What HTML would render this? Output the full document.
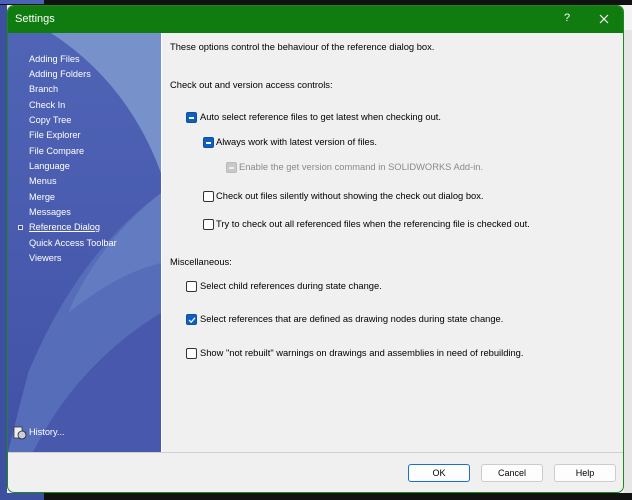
<!DOCTYPE html>
<html><head><meta charset="utf-8">
<style>
*{margin:0;padding:0;box-sizing:border-box}
body{width:632px;height:500px;overflow:hidden;background:#f3f3f3;position:relative;font-family:"Liberation Sans",sans-serif;font-size:9.35px;color:#000}
.abs{position:absolute;white-space:nowrap}
.dlg{position:absolute;left:7px;top:5px;width:617px;height:488px;background:#f0f0f0;border:1px solid #1b8a1b;border-radius:7px;overflow:hidden}
.tb{position:absolute;left:0;top:0;width:100%;height:27px;background:#107c10;color:#fff}
.nav{color:#fff;font-size:9.2px;left:21px}
.cb{position:absolute;width:11px;height:11px;border:1px solid #333;border-radius:2px;background:#fff}
.cb.on{background:#0f5fc0;border-color:#0c4fa0}
.cb.on::after{content:"";position:absolute;left:2px;top:4px;width:5px;height:1.5px;background:#fff}
.cb.chk{background:#0f5fc0;border-color:#0c4fa0}
.cb.dis{background:#c8c8c8;border-color:#bbb}
.cb.dis::after{content:"";position:absolute;left:2px;top:4px;width:5px;height:1.5px;background:#eee}
.btn{position:absolute;top:458px;width:62px;height:18px;border:1px solid #ccc;border-radius:3px;background:#fdfdfd;text-align:center;line-height:16px;font-size:9px}
</style></head><body>
<div class="abs" style="left:0;top:0;width:632px;height:5px;background:#111"></div>
<div class="abs" style="left:0;top:0;width:44px;height:4px;background:#4a62b8"></div>
<div class="abs" style="left:0;top:5px;width:7px;height:495px;background:#3d4f9f"></div>
<div class="abs" style="left:0;top:493px;width:632px;height:7px;background:#111"></div>
<div class="abs" style="left:0;top:493px;width:44px;height:7px;background:#3d4f9f"></div>
<div class="abs" style="left:624px;top:30px;width:8px;height:463px;background:#e6e6e6"></div>
<div class="dlg">
 <div class="tb"><span class="abs" style="left:7px;top:7px;font-size:11px">Settings</span>
  <span class="abs" style="left:556px;top:6px;font-size:11px">?</span>
  <svg class="abs" style="left:591px;top:8px" width="10" height="10"><path d="M1 1L9 9M9 1L1 9" stroke="#fff" stroke-width="1.2"/></svg>
 </div>
 <svg class="abs" style="left:0;top:27px" width="153" height="419">
  <defs><linearGradient id="g" x1="0" y1="0" x2="0" y2="1"><stop offset="0" stop-color="#5064b6"/><stop offset="1" stop-color="#4152a6"/></linearGradient></defs>
  <rect width="153" height="419" fill="url(#g)"/>
  <path d="M43 0 Q120 50 153 140 L153 0Z" fill="#7792ca"/>
  <path d="M153 160 Q70 220 20 340 L0 419 L153 419Z" fill="#566dba"/>
  <path d="M153 160 Q90 210 60 280 Q110 240 153 230Z" fill="#6c86c6" opacity="0.6"/>
  <path d="M153 280 Q70 330 25 419 L153 419Z" fill="#4858ac"/>
 </svg>
 <div class="abs" style="left:153px;top:27px;width:1px;height:419px;background:#fff"></div>
 <div class="abs" style="left:0;top:446px;width:617px;height:1px;background:#cfcfcf"></div>
 <span class="abs nav" style="top:48px">Adding Files</span>
 <span class="abs nav" style="top:63px">Adding Folders</span>
 <span class="abs nav" style="top:78px">Branch</span>
 <span class="abs nav" style="top:94px">Check In</span>
 <span class="abs nav" style="top:109px">Copy Tree</span>
 <span class="abs nav" style="top:124px">File Explorer</span>
 <span class="abs nav" style="top:140px">File Compare</span>
 <span class="abs nav" style="top:155px">Language</span>
 <span class="abs nav" style="top:170px">Menus</span>
 <span class="abs nav" style="top:186px">Merge</span>
 <span class="abs nav" style="top:201px">Messages</span>
 <span class="abs" style="left:10px;top:219px;width:5px;height:5px;border:1px solid #dde;background:#3a4a9a"></span>
 <span class="abs nav" style="top:216px;text-decoration:underline">Reference Dialog</span>
 <span class="abs nav" style="top:232px">Quick Access Toolbar</span>
 <span class="abs nav" style="top:247px">Viewers</span>
 <svg class="abs" style="left:5px;top:420px" width="14" height="14"><rect x="1" y="1" width="8" height="11" fill="#eee" stroke="#333" stroke-width="0.8"/><circle cx="9" cy="9" r="4" fill="#ccd" stroke="#222" stroke-width="0.8"/></svg>
 <span class="abs nav" style="left:21px;top:421px">History...</span>

 <span class="abs" style="left:162px;top:36px">These options control the behaviour of the reference dialog box.</span>
 <span class="abs" style="left:162px;top:74px">Check out and version access controls:</span>
 <span class="cb on" style="left:178px;top:106px"></span><span class="abs" style="left:192px;top:106px">Auto select reference files to get latest when checking out.</span>
 <span class="cb on" style="left:195px;top:131px"></span><span class="abs" style="left:208px;top:131px">Always work with latest version of files.</span>
 <span class="cb dis" style="left:218px;top:156px"></span><span class="abs" style="left:231px;top:156px;color:#8a8a8a">Enable the get version command in SOLIDWORKS Add-in.</span>
 <span class="cb" style="left:195px;top:185px"></span><span class="abs" style="left:208px;top:185px">Check out files silently without showing the check out dialog box.</span>
 <span class="cb" style="left:195px;top:213px"></span><span class="abs" style="left:208px;top:213px">Try to check out all referenced files when the referencing file is checked out.</span>
 <span class="abs" style="left:162px;top:251px">Miscellaneous:</span>
 <span class="cb" style="left:178px;top:275px"></span><span class="abs" style="left:192px;top:275px">Select child references during state change.</span>
 <span class="cb chk" style="left:178px;top:308px"><svg style="position:absolute;left:1px;top:1px" width="8" height="8"><path d="M1 4L3.2 6.2L7 1.8" stroke="#fff" stroke-width="1.2" fill="none"/></svg></span><span class="abs" style="left:192px;top:308px">Select references that are defined as drawing nodes during state change.</span>
 <span class="cb" style="left:178px;top:342px"></span><span class="abs" style="left:192px;top:342px">Show "not rebuilt" warnings on drawings and assemblies in need of rebuilding.</span>

 <div class="btn" style="left:400px;border-color:#1a6fd0">OK</div>
 <div class="btn" style="left:473px">Cancel</div>
 <div class="btn" style="left:546px">Help</div>
</div>
</body></html>
